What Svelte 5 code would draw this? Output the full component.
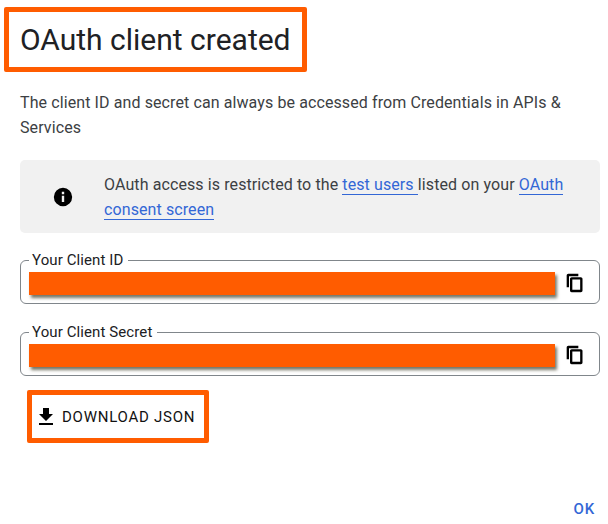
<script>
  const fields = ['Your Client ID', 'Your Client Secret'];
</script>

<main class="dialog">
  <div class="title-box"><h1>OAuth client created</h1></div>
  <p class="intro">The client ID and secret can always be accessed from Credentials in APIs &amp; Services</p>
  <div class="notice">
    <svg class="info" viewBox="0 0 24 24" width="22" height="22"><path d="M12 2a10 10 0 1 0 0 20 10 10 0 0 0 0-20zm1.300 15.500h-2.600v-6.800h2.600zm0-8.600h-2.600V6.400h2.600z"/></svg>
    <p>OAuth access is restricted to the <a href="#a">test users&nbsp;</a>listed on your <a href="#b">OAuth consent screen</a></p>
  </div>
  {#each fields as label}
    <fieldset class="field">
      <legend>{label}</legend>
      <div class="redact"></div>
      <svg class="copy" viewBox="0 0 24 24" width="20" height="20"><path d="M16 1H4c-1.100 0-2 .9-2 2v14h2.800V3.800H16V1zm3 4H8c-1.100 0-2 .9-2 2v14c0 1.100.9 2 2 2h11c1.100 0 2-.9 2-2V7c0-1.100-.9-2-2-2zm-.8 15.200H8.800V7.800h9.400v12.400z"/></svg>
    </fieldset>
  {/each}
  <button class="download">
    <svg viewBox="0 0 24 24" width="24" height="24"><path d="M19 9h-4V3H9v6H5l7 7 7-7zM5 18v2h14v-2H5z"/></svg>
    DOWNLOAD JSON
  </button>
  <div class="actions"><button class="ok">OK</button></div>
</main>

<style>
  :global(body) { margin: 0; background: #fff; }
  .dialog {
    width: 608px; height: 524px; box-sizing: border-box;
    padding: 7px 8px 0 20px;
    font-family: Roboto, "Liberation Sans", sans-serif;
    color: #3c4043;
    display: flex; flex-direction: column; align-items: flex-start;
  }
  .title-box {
    margin-left: -16px; width: 303px; height: 65px; box-sizing: border-box;
    border: 5px solid #ff5c00; border-radius: 2px;
    display: flex; align-items: center; padding-left: 11px;
  }
  h1 { margin: 0; font-size: 30px; font-weight: 400; color: #202124; white-space: nowrap; }
  .intro {
    margin: 18px 0 0; font-size: 16px; line-height: 25px; letter-spacing: 0.1px; width: 580px;
  }
  .notice {
    margin-top: 20px; width: 580px; height: 73px; box-sizing: border-box;
    background: #f1f1f1; border-radius: 5px;
    display: flex; align-items: center; padding: 0 30px 0 32px; gap: 30px;
  }
  .info { flex: none; fill: #000; }
  .notice p { margin: 0; font-size: 16px; line-height: 25px; letter-spacing: 0.1px; }
  a { color: #3367d6; text-decoration: none; border-bottom: 1px solid #3367d6; }
  .field {
    margin: 0 0 20px; width: 580px; height: 52px; box-sizing: border-box;
    border: 1px solid #80868b; border-radius: 6px; padding: 0 0 0 8px;
    position: relative; min-inline-size: 0;
    display: flex;
  }
  .field:first-of-type { margin-top: 19px; }
  legend { font-size: 15px; line-height: 16px; padding: 0 5px 0 3px; margin-left: 0; color: #202124; letter-spacing: 0.1px; font-weight: 400; }
  .redact {
    width: 526px; height: 23px; margin-top: 4px;
    background: #ff5c00; box-shadow: 2px 3px 3px #777767;
  }
  .copy { position: absolute; right: 14px; top: 5px; fill: #000; }
  .download {
    margin: -6px 0 0 7px; width: 182px; height: 53px; box-sizing: border-box;
    border: 5px solid #ff5c00; border-radius: 2px; background: #fff;
    display: flex; align-items: center; gap: 4px; padding: 0 0 0 2px;
    font: 400 15px Roboto, sans-serif; letter-spacing: 0.75px; color: #111;
  }
  .download svg { fill: #000; flex: none; }
  .actions { margin-top: auto; align-self: flex-end; padding-bottom: 6px; }
  .ok {
    border: 0; background: none; padding: 0 5px 0 0;
    font: 500 15px Roboto, sans-serif; letter-spacing: 0.8px; color: #3367d6;
  }
</style>
